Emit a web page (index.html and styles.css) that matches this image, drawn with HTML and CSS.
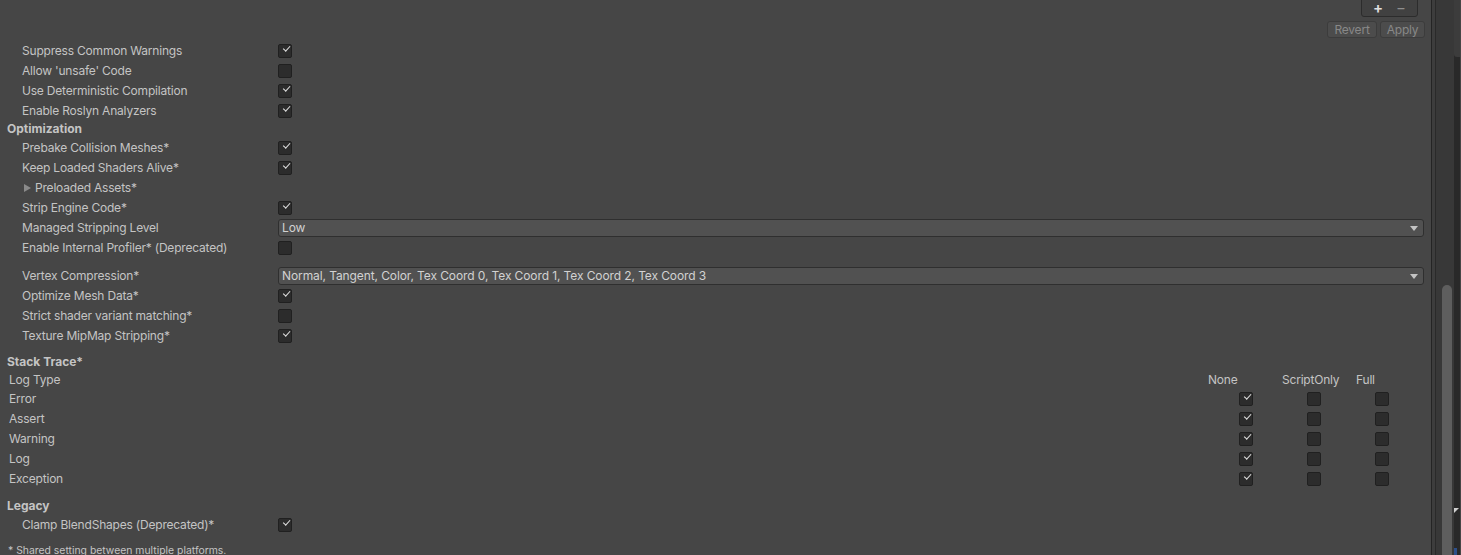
FILE: index.html
```html
<!DOCTYPE html>
<html>
<head>
<meta charset="utf-8">
<link rel="stylesheet" href="styles.css">
</head>
<body>
<div class="page">
  <div class="content">
    <div class="toolbar">
      <div class="pm-box"><span class="plus">+</span><span class="minus">−</span></div>
      <div class="btns"><span class="btn revert">Revert</span><span class="btn apply">Apply</span></div>
    </div>

    <div class="row"><div class="label">Suppress Common Warnings</div><span class="cb on"></span></div>
    <div class="row"><div class="label">Allow 'unsafe' Code</div><span class="cb"></span></div>
    <div class="row"><div class="label">Use Deterministic Compilation</div><span class="cb on"></span></div>
    <div class="row"><div class="label">Enable Roslyn Analyzers</div><span class="cb on"></span></div>

    <div class="section">Optimization</div>
    <div class="row"><div class="label">Prebake Collision Meshes*</div><span class="cb on"></span></div>
    <div class="row"><div class="label">Keep Loaded Shaders Alive*</div><span class="cb on"></span></div>
    <div class="row"><div class="label foldout"><span class="tri"></span>Preloaded Assets*</div></div>
    <div class="row"><div class="label">Strip Engine Code*</div><span class="cb on"></span></div>
    <div class="row"><div class="label">Managed Stripping Level</div><div class="dropdown"><span>Low</span><span class="arrow"></span></div></div>
    <div class="row"><div class="label">Enable Internal Profiler* (Deprecated)</div><span class="cb"></span></div>

    <div class="row gap"><div class="label">Vertex Compression*</div><div class="dropdown"><span>Normal, Tangent, Color, Tex Coord 0, Tex Coord 1, Tex Coord 2, Tex Coord 3</span><span class="arrow"></span></div></div>
    <div class="row"><div class="label">Optimize Mesh Data*</div><span class="cb on"></span></div>
    <div class="row"><div class="label">Strict shader variant matching*</div><span class="cb"></span></div>
    <div class="row"><div class="label">Texture MipMap Stripping*</div><span class="cb on"></span></div>

    <div class="section st">Stack Trace*</div>
    <div class="trow thead"><div class="tl">Log Type</div><div class="tc c1">None</div><div class="tc c2">ScriptOnly</div><div class="tc c3">Full</div></div>
    <div class="trow"><div class="tl">Error</div><div class="tc c1"><span class="cb on"></span></div><div class="tc c2"><span class="cb"></span></div><div class="tc c3"><span class="cb"></span></div></div>
    <div class="trow"><div class="tl">Assert</div><div class="tc c1"><span class="cb on"></span></div><div class="tc c2"><span class="cb"></span></div><div class="tc c3"><span class="cb"></span></div></div>
    <div class="trow"><div class="tl">Warning</div><div class="tc c1"><span class="cb on"></span></div><div class="tc c2"><span class="cb"></span></div><div class="tc c3"><span class="cb"></span></div></div>
    <div class="trow"><div class="tl">Log</div><div class="tc c1"><span class="cb on"></span></div><div class="tc c2"><span class="cb"></span></div><div class="tc c3"><span class="cb"></span></div></div>
    <div class="trow"><div class="tl">Exception</div><div class="tc c1"><span class="cb on"></span></div><div class="tc c2"><span class="cb"></span></div><div class="tc c3"><span class="cb"></span></div></div>

    <div class="section lg">Legacy</div>
    <div class="row"><div class="label">Clamp BlendShapes (Deprecated)*</div><span class="cb on"></span></div>
    <div class="footer">* Shared setting between multiple platforms.</div>
  </div>
  <div class="sep1"></div>
  <div class="sep2"></div>
  <div class="scrollbar"><div class="thumb"></div></div>
  <div class="edge"><div class="edge-top"></div><div class="edge-tri"></div><div class="edge-blue"></div></div>
</div>
</body>
</html>
```

FILE: styles.css
```css
* { box-sizing: border-box; }
html, body { margin: 0; padding: 0; }
body {
  background: #464646;
  font-family: Inter, "Noto Sans", sans-serif;
  font-size: 12px;
  letter-spacing: -0.2px;
  color: #c4c4c4;
  width: 1461px;
  height: 555px;
  overflow: hidden;
}
.page { display: flex; height: 555px; }
.content { width: 1431px; flex: none; display: flex; flex-direction: column; }
.content > * { flex: none; }

.toolbar { height: 42px; display: flex; flex-direction: column; align-items: flex-end; padding-right: 6px; }
.pm-box {
  width: 57px; height: 18px; margin-top: -1px; margin-right: 7px;
  border: 1px solid #2c2c2c; border-radius: 0 0 3px 3px;
  background: #414141;
  display: flex; align-items: center; justify-content: center; gap: 13px;
  font-size: 15px; line-height: 16px; letter-spacing: 0;
}
.plus { color: #e0e0e0; font-weight: 600; }
.minus { color: #8e8e8e; }
.btns { display: flex; gap: 3px; margin-top: 4px; }
.btn {
  height: 17px; line-height: 15px; padding: 0 4px;
  border: 1px solid #3c3c3c; border-radius: 3px;
  background: #4c4c4c; color: #888888; font-size: 12px;
}
.revert { width: 50px; text-align: center; }
.apply { width: 45px; text-align: center; }

.row { display: flex; align-items: center; height: 18px; margin-bottom: 2px; }
.row.gap { margin-top: 8px; }
.label { width: 278px; flex: none; padding-left: 22px; white-space: nowrap; line-height: 18px; }
.foldout { display: flex; align-items: center; padding-left: 24px; }
.tri {
  width: 0; height: 0; margin-right: 4px;
  border-top: 4.5px solid transparent; border-bottom: 4.5px solid transparent;
  border-left: 7px solid #8a8a8a;
}

.cb {
  width: 14px; height: 14px; flex: none; display: inline-block;
  border: 1px solid #202020; border-radius: 2px; background: #2c2c2c;
  position: relative;
}
.cb.on::after {
  content: ""; position: absolute; left: 3px; top: 2px;
  width: 6px; height: 3px;
  border-left: 1.5px solid #e4e4e4; border-bottom: 1.5px solid #e4e4e4;
  transform: rotate(-48deg) translate(-1px, 2px);
  transform-origin: left top;
}

.dropdown {
  flex: 1; height: 18px; margin-right: 7px;
  border: 1px solid #2f2f2f; border-radius: 3px; background: #515151;
  color: #d2d2d2; padding-left: 3px; line-height: 16px; letter-spacing: -0.1px;
  display: flex; align-items: center; justify-content: space-between;
  white-space: nowrap;
}
.arrow {
  width: 0; height: 0; margin-right: 5px;
  border-left: 4px solid transparent; border-right: 4px solid transparent;
  border-top: 5px solid #c4c4c4;
}

.section { height: 14px; line-height: 14px; font-weight: 700; letter-spacing: 0; padding-left: 7px; margin-bottom: 3px; }
.section.st { margin-top: 8px; margin-bottom: 2px; }
.section.lg { margin-top: 9px; margin-bottom: 3px; }

.trow { display: grid; grid-template-columns: 1fr 74px 74px 68px; height: 18px; margin-bottom: 2px; padding-left: 9px; width: 1424px; align-items: center; }
.trow.thead { margin-bottom: 1px; }
.tl { line-height: 18px; }
.tc { display: flex; align-items: center; line-height: 18px; }
.c1 .cb { margin-left: 31px; }
.c2 .cb { margin-left: 25px; }
.c3 .cb { margin-left: 19px; }

.footer { padding-left: 8px; font-size: 10.4px; letter-spacing: 0; line-height: 14px; margin-top: 8px; color: #c4c4c4; }

.sep1 { width: 1px; background: #242424; flex: none; }
.sep2 { width: 4px; background: #3d3d3d; border-right: 1px solid #2a2a2a; flex: none; }
.scrollbar { width: 18px; background: #383838; flex: none; position: relative; }
.thumb { position: absolute; left: 6px; top: 285px; width: 10px; bottom: 0; background: #5e5e5e; border-radius: 5px 5px 0 0; }
.edge { width: 6px; flex: none; background: #292929; position: relative; }
.edge-top { height: 57px; background: #3c3c3c; border-radius: 0 0 0 3px; }
.edge-tri { position: absolute; left: 0; top: 508px; width: 0; height: 0; border-top: 5px solid #d0d0d0; border-right: 5px solid transparent; }
.edge-blue { position: absolute; left: 0; top: 548px; width: 3px; height: 7px; background: #2d4f8a; }
```
